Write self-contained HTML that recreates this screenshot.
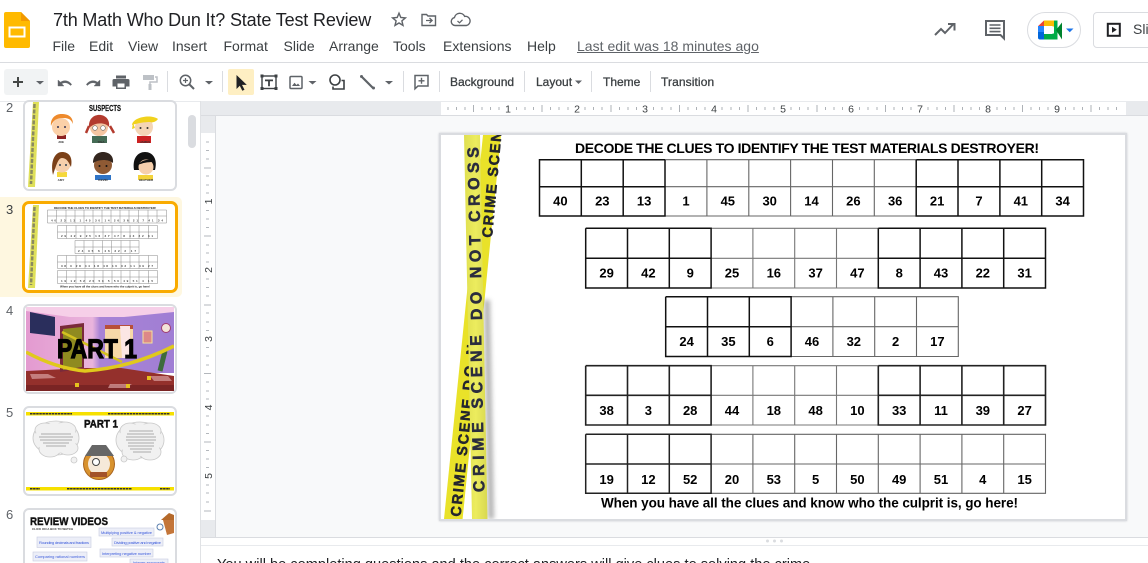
<!DOCTYPE html>
<html><head><meta charset="utf-8"><style>
*{box-sizing:border-box}
html,body{margin:0;padding:0;width:1148px;height:563px;overflow:hidden;background:#fff;font-family:"Liberation Sans",Arial,sans-serif;color:#3c4043}
#root{position:relative;width:1148px;height:563px;overflow:hidden;background:#fff}
.a{position:absolute;white-space:nowrap}
.m{position:absolute;top:38px;font-size:14px;line-height:17px;color:#3c4043}
.tb{position:absolute;top:75px;font-size:12px;line-height:14px;color:#3c4043;-webkit-text-stroke:.3px #3c4043}
.sep{position:absolute;top:71px;width:1px;height:21px;background:#dadce0}
.num{position:absolute;left:6px;font-size:13px;line-height:15px;color:#5f6368}
.th{position:absolute;left:23px;width:154px;background:#fff;border:2px solid #dadce0;border-radius:6px;overflow:hidden}
svg{position:absolute;display:block}
</style></head><body><div id="root">

<!-- top header -->
<svg style="left:0;top:0" width="40" height="56" viewBox="0 0 40 56">
<path d="M6 12H21L30 21V46a2 2 0 0 1-2 2H6a2 2 0 0 1-2-2V14a2 2 0 0 1 2-2z" fill="#ffba00"/>
<path d="M21 12L30 21H21z" fill="#f29900"/>
<rect x="9.500" y="27.500" width="15" height="9" fill="none" stroke="#fff" stroke-width="2"/>
</svg>
<div class="a" style="left:53px;top:10px;font-size:18px;line-height:21px;color:#202124;letter-spacing:-.15px">7th Math Who Dun It? State Test Review</div>
<svg style="left:388px;top:8px" width="90" height="24" viewBox="388 8 90 24" fill="none" stroke="#5f6368" stroke-width="1.400">
<path d="M399 13.200l1.800 4.300 4.600.4-3.500 3 1.100 4.500-4-2.400-4 2.400 1.100-4.500-3.500-3 4.600-.4z"/>
<path d="M422 14.500h4.500l1.500 1.500h7.500v9.500H422z"/><path d="M426 20.500h5.500M429.500 18l2.600 2.500-2.600 2.500" stroke-width="1.300"/>
<path d="M455 25.500a4 4 0 0 1-.6-7.900 5.500 5.500 0 0 1 10.300-1.200 4.600 4.600 0 0 1 1.600 9.100z"/><path d="M457.500 21l2 1.800 3-3" stroke-width="1.200"/>
</svg>
<div class="m" style="left:52.500px">File</div>
<div class="m" style="left:89px">Edit</div>
<div class="m" style="left:128px">View</div>
<div class="m" style="left:172px">Insert</div>
<div class="m" style="left:223.500px">Format</div>
<div class="m" style="left:283.500px">Slide</div>
<div class="m" style="left:329px">Arrange</div>
<div class="m" style="left:393px">Tools</div>
<div class="m" style="left:443px">Extensions</div>
<div class="m" style="left:527px">Help</div>
<div class="m" style="left:577px;color:#5f6368;text-decoration:underline;letter-spacing:.02px">Last edit was 18 minutes ago</div>

<!-- right header -->
<svg style="left:930px;top:14px" width="80" height="32" viewBox="930 14 80 32" fill="none">
<path d="M935 35l6-6 4 4 8-8.500" stroke="#5f6368" stroke-width="2"/><path d="M948 24h6.500v6.500" stroke="#5f6368" stroke-width="2"/>
<path d="M986 21h18v17.500l-3.500-3.500H986z" stroke="#5f6368" stroke-width="2" stroke-linejoin="miter"/>
<path d="M989.500 25h11M989.500 28.300h11M989.500 31.600h11" stroke="#5f6368" stroke-width="1.600"/>
</svg>
<div class="a" style="left:1027px;top:12px;width:54px;height:36px;border:1px solid #dadce0;border-radius:18px"></div>
<svg style="left:1036px;top:18px" width="40" height="24" viewBox="1036 18 40 24">
<path d="M1044 20.500h10v6h-10z" fill="#fbbc04"/><path d="M1044 20.500l-5.800 5.500h5.800z" fill="#ea4335"/>
<path d="M1038 26h6v6h-6z" fill="#2684fc"/><path d="M1038 32h6v7.500h-4a2 2 0 0 1-2-2z" fill="#0066da"/>
<path d="M1044 33.500h10v6h-10z" fill="#00ac47"/><path d="M1054 20.500h3.500V39.500H1054z" fill="#00ac47"/>
<path d="M1056 30l6-5.500v15z" fill="#00832d"/><path d="M1056 30l6-7.500v15z" fill="#00832d"/>
<rect x="1044" y="26" width="8.500" height="8" fill="#fff"/>
<path d="M1066 28.500h7.500l-3.750 3.800z" fill="#1a73e8"/>
</svg>
<div class="a" style="left:1093px;top:12px;width:80px;height:36px;border:1px solid #dadce0;border-radius:4px"></div>
<svg style="left:1106px;top:22px" width="16" height="16" viewBox="0 0 16 16"><rect x="1.800" y="1.800" width="12" height="12" fill="none" stroke="#202124" stroke-width="2"/><path d="M6 4.800l4.800 3-4.800 3z" fill="#202124"/></svg>
<div class="a" style="left:1133px;top:21px;font-size:14px;line-height:17px;color:#3c4043">Sli</div>
<div class="a" style="left:0;top:62px;width:1148px;height:1px;background:#dadce0"></div>

<!-- toolbar -->
<div class="a" style="left:4px;top:69px;width:44px;height:26px;background:#f1f3f4;border-radius:3px"></div>
<div class="a" style="left:228px;top:69px;width:26px;height:26px;background:#feefc3;border-radius:2px"></div>
<div class="sep" style="left:167px"></div><div class="sep" style="left:222px"></div><div class="sep" style="left:403px"></div>
<div class="sep" style="left:439px"></div><div class="sep" style="left:524px"></div><div class="sep" style="left:591px"></div><div class="sep" style="left:650px"></div>
<svg style="left:0;top:63px" width="440" height="38" viewBox="0 63 440 38">
<path d="M18 77v10M13 82h10" stroke="#444746" stroke-width="2" fill="none"/>
<path d="M36 81h8l-4 3.500z" fill="#5f6368"/>
<path d="M58 80v6h6l-2.200-2.200c1.800-1.500 5.800-1.800 8.700 1.700l1.200-1c-3-4.400-8-4.700-11.200-2.300z" fill="#5f6368" stroke="#5f6368" stroke-width=".4"/>
<path d="M100 80v6h-6l2.200-2.200c-1.800-1.500-5.800-1.800-8.700 1.700l-1.200-1c3-4.400 8-4.700 11.200-2.300z" fill="#5f6368" stroke="#5f6368" stroke-width=".4"/>
<path d="M116 75.500h10v3h-10zM114 79h14a1.500 1.500 0 0 1 1.500 1.500v6H126V89H116v-2.500h-3.500v-6A1.500 1.500 0 0 1 114 79z" fill="#5f6368"/><rect x="117.500" y="83.500" width="7" height="4" fill="#fff"/>
<path d="M143 75h11v5h-11z" fill="#bdc1c6"/><path d="M155 77h2v5h-7v2" fill="none" stroke="#bdc1c6" stroke-width="1.500"/><rect x="148.500" y="84" width="3" height="6" fill="#bdc1c6"/>
<circle cx="185.500" cy="80.500" r="5.200" fill="none" stroke="#5f6368" stroke-width="1.500"/><path d="M189.500 84.500l4.500 4.500" stroke="#5f6368" stroke-width="2"/><path d="M183 80.500h5M185.500 78v5" stroke="#5f6368" stroke-width="1.200"/>
<path d="M205 81h8l-4 3.500z" fill="#5f6368"/>
<path d="M236.500 75l0 14 3.300-3.300 2.500 5 2.200-1-2.500-4.800h4.800z" fill="#202124"/>
<rect x="262" y="76" width="14" height="12.500" fill="none" stroke="#3c4043" stroke-width="1.400"/>
<g fill="#3c4043"><rect x="260.500" y="74.500" width="3" height="3"/><rect x="274.500" y="74.500" width="3" height="3"/><rect x="260.500" y="87" width="3" height="3"/><rect x="274.500" y="87" width="3" height="3"/></g>
<path d="M265 79.500h8v1.800h-3.100v5h-1.800v-5H265z" fill="#3c4043"/>
<rect x="290" y="76.500" width="12" height="12" rx="1" fill="none" stroke="#5f6368" stroke-width="1.500"/><path d="M292 86l2.500-3.200 2 2.200 1.500-1.500 2 2.500z" fill="#5f6368"/>
<path d="M308.500 81h8l-4 3.500z" fill="#5f6368"/>
<circle cx="335" cy="80" r="5" fill="none" stroke="#3c4043" stroke-width="1.600"/><path d="M341.500 80.500h2.500v8.500h-11v-2.500" fill="none" stroke="#3c4043" stroke-width="1.600"/>
<path d="M362 77l11 11" stroke="#5f6368" stroke-width="2.200"/><circle cx="361.500" cy="76.500" r="1.500" fill="#5f6368"/><circle cx="373.500" cy="88" r="1.500" fill="#5f6368"/>
<path d="M385 81h8l-4 3.500z" fill="#5f6368"/>
<path d="M415 75.500h13v10.500h-10l-3 2.800z" fill="none" stroke="#5f6368" stroke-width="1.500"/><path d="M421.500 77.800v6M418.500 80.800h6" stroke="#5f6368" stroke-width="1.400"/>
</svg>
<div class="tb" style="left:450px">Background</div>
<div class="tb" style="left:536px">Layout</div>
<svg style="left:574px;top:80px" width="9" height="5" viewBox="0 0 9 5"><path d="M1 .5h7L4.500 4z" fill="#5f6368"/></svg>
<div class="tb" style="left:603px">Theme</div>
<div class="tb" style="left:661px;letter-spacing:.1px">Transition</div>
<div class="a" style="left:0;top:101px;width:1148px;height:1px;background:#e8eaed"></div>

<!-- workspace -->
<div class="a" style="left:200px;top:102px;width:948px;height:435px;background:#f8f9fa"></div>
<div class="a" style="left:200px;top:101px;width:1px;height:462px;background:#e0e2e5"></div>

<!-- horizontal ruler -->
<svg style="left:201px;top:102px" width="947" height="14" viewBox="201 102 947 14">
<rect x="201" y="102" width="947" height="14" fill="#fff"/>
<rect x="201" y="102" width="240" height="13" fill="#e8eaed"/>
<rect x="1126" y="102" width="22" height="13" fill="#e8eaed"/>
<path d="M201 115.500H1148" stroke="#dadce0"/>
<path d="M448 107v3M456.500 107v3M465 107v3M473.500 105v7M482 107v3M490.500 107v3M499 107v3M516.500 107v3M525 107v3M533.500 107v3M542 105v7M550.500 107v3M559 107v3M568 107v3M585 107v3M593.500 107v3M602 107v3M611 105v7M619.500 107v3M628 107v3M636.500 107v3M653.500 107v3M662 107v3M671 107v3M679.500 105v7M688 107v3M696.500 107v3M705 107v3M722 107v3M731 107v3M739.500 107v3M748 105v7M756.500 107v3M765 107v3M774 107v3M791 107v3M799.500 107v3M808 107v3M817 105v7M825.500 107v3M834 107v3M842.500 107v3M859.500 107v3M868 107v3M877 107v3M885.500 105v7M894 107v3M902.500 107v3M911 107v3M928 107v3M937 107v3M945.500 107v3M954 105v7M962.500 107v3M971 107v3M979.500 107v3M997 107v3M1005.500 107v3M1014 107v3M1022.500 105v7M1031 107v3M1039.500 107v3M1048 107v3M1065.500 107v3M1074 107v3M1082.500 107v3M1091 105v7M1099.500 107v3M1108 107v3M1116.500 107v3" stroke="#9aa0a6" stroke-width=".8" fill="none"/>
<g font-family="Liberation Sans" font-size="10.500" fill="#3c4043" text-anchor="middle">
<text x="508" y="112.500">1</text><text x="577" y="112.500">2</text><text x="645" y="112.500">3</text><text x="714" y="112.500">4</text><text x="783" y="112.500">5</text><text x="851" y="112.500">6</text><text x="920" y="112.500">7</text><text x="988" y="112.500">8</text><text x="1057" y="112.500">9</text></g>
</svg>

<!-- vertical ruler -->
<svg style="left:201px;top:116px" width="15" height="421" viewBox="201 116 15 421">
<rect x="201" y="116" width="14" height="421" fill="#fff"/>
<rect x="201" y="116" width="14" height="17" fill="#e8eaed"/>
<rect x="201" y="520" width="14" height="17" fill="#e8eaed"/>
<path d="M215.500 116V537" stroke="#dadce0"/>
<path d="M206 142h3M206 150.500h3M206 159h3M204 168h7M206 176h3M206 185h3M206 193h3M206 210.500h3M206 219h3M206 227.500h3M204 236h7M206 245h3M206 253h3M206 262h3M206 279h3M206 287.500h3M206 296h3M204 305h7M206 313h3M206 322h3M206 330.500h3M206 347.500h3M206 356h3M206 365h3M204 373.500h7M206 382h3M206 391h3M206 399h3M206 416h3M206 425h3M206 433.500h3M204 442h7M206 450.500h3M206 459h3M206 467.500h3M206 485h3M206 493h3M206 502h3M204 511h7" stroke="#9aa0a6" stroke-width=".8" fill="none"/>
<g font-family="Liberation Sans" font-size="10.500" fill="#3c4043" text-anchor="middle">
<text transform="translate(212,201.500) rotate(-90)">1</text><text transform="translate(212,270) rotate(-90)">2</text><text transform="translate(212,339) rotate(-90)">3</text><text transform="translate(212,407.500) rotate(-90)">4</text><text transform="translate(212,476) rotate(-90)">5</text></g>
</svg>

<!-- slide -->
<div class="a" style="left:439px;top:133px;width:688px;height:388px;background:#fff;border:2px solid #dadce0;box-shadow:0 0 2px #c8cacd"></div>
<svg style="left:441px;top:135px" width="685" height="384" viewBox="441 135 685 384">
<defs><filter id="bl" x="-100%" width="300%"><feGaussianBlur stdDeviation="2.500"/></filter>
<linearGradient id="ga" x1="0" x2="1" y1="0" y2="0"><stop offset="0" stop-color="#dfdf50"/><stop offset=".5" stop-color="#ecec5e"/><stop offset="1" stop-color="#d8d850"/></linearGradient></defs>
<path d="M483 135H501L462.600 519H444z" fill="#e9e229"/>
<g font-family="Liberation Sans" font-weight="bold" font-size="14.500" fill="#23252f" stroke="#23252f" stroke-width=".5">
<text transform="translate(460.500,517) rotate(-84.200)" textLength="118" lengthAdjust="spacing">CRIME SCENE</text>
<text transform="translate(472.500,391) rotate(-84.200)" textLength="46" lengthAdjust="spacing">DO N</text>
<text transform="translate(492,238) rotate(-84.800)" textLength="118" lengthAdjust="spacing">CRIME SCENE</text>
</g>
<path d="M484 300l4 219h6L490 300z" fill="#666" opacity=".5" filter="url(#bl)"/>
<path d="M464 135H480L487.500 519H472z" fill="url(#ga)"/>
<g font-family="Liberation Sans" font-weight="bold" font-size="16" fill="#2a2c3e" stroke="#2a2c3e" stroke-width=".5">
<text transform="translate(484.500,492) rotate(-91.200)" textLength="157" lengthAdjust="spacing">CRIME SCENE</text>
<text transform="translate(482,320) rotate(-91.200)" textLength="173" lengthAdjust="spacing">DO NOT CROSS</text>
</g>
<!-- grid: gray parts -->
<path d="M665 159.700H916M665 186.700H916M665 216H916M706.900 159.700V216M748.800 159.700V216M790.600 159.700V216M832.500 159.700V216M874.300 159.700V216" stroke="#666" stroke-width="1.100" fill="none"/>
<path d="M711 228.300H878.300M711 258.300H878.300M711 288H878.300M752.900 228.300V288M794.700 228.300V288M836.500 228.300V288" stroke="#777" stroke-width="1.100" fill="none"/>
<path d="M791 296.700H958.300V356.500H791M791 326.700H958.300M832.900 296.700V356.500M874.700 296.700V356.500M916.500 296.700V356.500" stroke="#666" stroke-width="1.100" fill="none"/>
<path d="M711 365.700H878.300M711 395.300H878.300M711 425H878.300M752.900 365.700V425M794.700 365.700V425M836.500 365.700V425" stroke="#777" stroke-width="1.100" fill="none"/>
<path d="M711 434.300H1045.500V493.300H711M711 464H1045.500M752.900 434.300V493.300M794.700 434.300V493.300M836.500 434.300V493.300M878.300 434.300V493.300M920.100 434.300V493.300M961.900 434.300V493.300M1003.700 434.300V493.300" stroke="#666" stroke-width="1.100" fill="none"/>
<!-- grid: dark parts -->
<path d="M665 159.700H539.500V216H665V159.700M539.500 186.700H665M581.300 159.700V216M623.200 159.700V216" stroke="#111" stroke-width="1.500" fill="none"/>
<path d="M916.200 159.700H1083.500V216H916.200V159.700M916.200 186.700H1083.500M958 159.700V216M999.900 159.700V216M1041.700 159.700V216" stroke="#111" stroke-width="1.500" fill="none"/>
<path d="M585.700 228.300H711.100V288H585.700V228.300M585.700 258.300H711.100M627.500 228.300V288M669.300 228.300V288" stroke="#111" stroke-width="1.500" fill="none"/>
<path d="M878.300 228.300H1045.500V288H878.300V228.300M878.300 258.300H1045.500M920.100 228.300V288M961.900 228.300V288M1003.700 228.300V288" stroke="#111" stroke-width="1.500" fill="none"/>
<path d="M665.700 296.700H791.100V356.500H665.700V296.700M665.700 326.700H791.100M707.500 296.700V356.500M749.300 296.700V356.500" stroke="#111" stroke-width="1.500" fill="none"/>
<path d="M585.700 365.700H711.100V425H585.700V365.700M585.700 395.300H711.100M627.500 365.700V425M669.300 365.700V425" stroke="#222" stroke-width="1.600" fill="none"/>
<path d="M878.300 365.700H1045.500V425H878.300V365.700M878.300 395.300H1045.500M920.100 365.700V425M961.900 365.700V425M1003.700 365.700V425" stroke="#222" stroke-width="1.600" fill="none"/>
<path d="M585.700 434.300H711.100V493.300H585.700V434.300M585.700 464H711.100M627.500 434.300V493.300M669.300 434.300V493.300" stroke="#222" stroke-width="1.500" fill="none"/>
<g font-family="Liberation Sans" font-weight="bold" fill="#000">
<text x="807" y="153" font-size="14" text-anchor="middle" textLength="464" lengthAdjust="spacing">DECODE THE CLUES TO IDENTIFY THE TEST MATERIALS DESTROYER!</text>
<text x="809.500" y="507.500" font-size="13.500" text-anchor="middle" textLength="417" lengthAdjust="spacing">When you have all the clues and know who the culprit is, go here!</text>
<g font-size="13" text-anchor="middle">
<text x="560.400" y="205.500">40</text><text x="602.300" y="205.500">23</text><text x="644.100" y="205.500">13</text><text x="686" y="205.500">1</text><text x="727.800" y="205.500">45</text><text x="769.700" y="205.500">30</text><text x="811.500" y="205.500">14</text><text x="853.400" y="205.500">26</text><text x="895.200" y="205.500">36</text><text x="937.100" y="205.500">21</text><text x="979" y="205.500">7</text><text x="1020.800" y="205.500">41</text><text x="1062.600" y="205.500">34</text>
<text x="606.600" y="277.500">29</text><text x="648.400" y="277.500">42</text><text x="690.200" y="277.500">9</text><text x="732" y="277.500">25</text><text x="773.800" y="277.500">16</text><text x="815.600" y="277.500">37</text><text x="857.400" y="277.500">47</text><text x="899.200" y="277.500">8</text><text x="941" y="277.500">43</text><text x="982.800" y="277.500">22</text><text x="1024.600" y="277.500">31</text>
<text x="686.600" y="346">24</text><text x="728.400" y="346">35</text><text x="770.200" y="346">6</text><text x="812" y="346">46</text><text x="853.800" y="346">32</text><text x="895.600" y="346">2</text><text x="937.400" y="346">17</text>
<text x="606.600" y="415">38</text><text x="648.400" y="415">3</text><text x="690.200" y="415">28</text><text x="732" y="415">44</text><text x="773.800" y="415">18</text><text x="815.600" y="415">48</text><text x="857.400" y="415">10</text><text x="899.200" y="415">33</text><text x="941" y="415">11</text><text x="982.800" y="415">39</text><text x="1024.600" y="415">27</text>
<text x="606.600" y="484">19</text><text x="648.400" y="484">12</text><text x="690.200" y="484">52</text><text x="732" y="484">20</text><text x="773.800" y="484">53</text><text x="815.600" y="484">5</text><text x="857.400" y="484">50</text><text x="899.200" y="484">49</text><text x="941" y="484">51</text><text x="982.800" y="484">4</text><text x="1024.600" y="484">15</text>
</g></g>
</svg>

<!-- notes -->
<div class="a" style="left:201px;top:537px;width:947px;height:1px;background:#dadce0"></div>
<div class="a" style="left:201px;top:538px;width:947px;height:8px;background:#fff"></div>
<div class="a" style="left:201px;top:545px;width:947px;height:1px;background:#e8eaed"></div>
<svg style="left:764px;top:538px" width="24" height="6" viewBox="0 0 24 6"><circle cx="3.500" cy="3" r="1.500" fill="#dadce0"/><circle cx="10.500" cy="3" r="1.500" fill="#dadce0"/><circle cx="17.500" cy="3" r="1.500" fill="#dadce0"/></svg>
<div class="a" style="left:217px;top:555px;font-size:14.600px;line-height:20px;color:#202124">You will be completing questions and the correct answers will give clues to solving the crime.</div>

<!-- sidebar -->
<div class="a" style="left:0;top:102px;width:200px;height:461px;background:#fff;overflow:hidden"></div>
<div class="a" style="left:0;top:197px;width:182px;height:100px;background:#fef7e0;border-radius:0 5px 5px 0"></div>
<div class="num" style="top:100px">2</div>
<div class="num" style="top:202px;color:#3c4043">3</div>
<div class="num" style="top:303px">4</div>
<div class="num" style="top:405px">5</div>
<div class="num" style="top:507px">6</div>
<div class="a" style="left:188px;top:115px;width:8px;height:33px;background:#dadce0;border-radius:4px"></div>

<!-- thumb 2 -->
<div class="th" style="top:100px;height:91px"></div>
<svg style="left:25px;top:102px" width="150" height="87" viewBox="25 102 150 87">
<path d="M33 102h6l-4 85h-7z" fill="#dfe05a"/><path d="M34.500 104l-3.500 80" stroke="#8a8a60" stroke-width="2.500" stroke-dasharray="4 1.500"/>
<text x="105" y="111" font-family="Liberation Sans" font-weight="bold" font-size="8" text-anchor="middle" fill="#111" stroke="#111" stroke-width=".2" textLength="32" lengthAdjust="spacingAndGlyphs">SUSPECTS</text>
<path d="M52 134c4-2 16-2 20 0v4H52z" fill="#fff"/><path d="M57 135h9v4h-9z" fill="#8c2222"/>
<circle cx="61" cy="127" r="9" fill="#fbd0a8"/><path d="M51 126c-1-8 5-12 10-12s12 1 12 10c-2-5-5-6-10-6-6 0-10 2-12 8z" fill="#ee8a2c"/><circle cx="58" cy="127" r="1" fill="#335"/><circle cx="65" cy="127" r="1" fill="#335"/>
<path d="M92 136h15v7H92z" fill="#456b55"/><circle cx="99" cy="127" r="9" fill="#f5c6a2"/><path d="M89 128c-1-10 6-14 12-13s9 6 8 12c-4-5-14-5-20 1z" fill="#b33b2e"/><path d="M89 126l-3 7M110 126l4 7" stroke="#b33b2e" stroke-width="2.500"/><circle cx="95" cy="128" r="2.300" fill="#fff" stroke="#666" stroke-width=".6"/><circle cx="103" cy="128" r="2.300" fill="#fff" stroke="#666" stroke-width=".6"/>
<path d="M137 136h14v7h-14z" fill="#c22"/><circle cx="144" cy="127" r="9" fill="#f4d5b5"/><path d="M132 125c1-8 19-11 26-6-2 3-6 4-8 3-5 0-12 1-18 3z" fill="#f1d21d"/><path d="M133 123l-1 6 3-1z" fill="#f1d21d"/><circle cx="140.500" cy="128" r="1" fill="#333"/><circle cx="147.500" cy="128" r="1" fill="#333"/>
<path d="M57 172h10v5H57z" fill="#f5d83a"/><circle cx="62" cy="164" r="8.500" fill="#f6cfac"/><path d="M53 175c-3-14 2-23 9-23s11 5 9 15c-2-4-4-9-9-9-4 0-6 8-9 17z" fill="#7b4018"/><circle cx="60" cy="165" r="1" fill="#345"/><circle cx="66" cy="165" r="1" fill="#345"/>
<path d="M95 175h16v5H95z" fill="#2f74c6"/><circle cx="103" cy="165" r="9" fill="#8f5a34"/><path d="M93 163c0-8 5-11 10-11s11 3 10 11c-5-4-14-4-20 0z" fill="#33261f"/><circle cx="99.500" cy="166" r="1" fill="#111"/><circle cx="106.500" cy="166" r="1" fill="#111"/>
<path d="M138 175h15v5h-15z" fill="#f3d33b"/><path d="M134 170c-2-12 4-18 11-18s13 6 10 18z" fill="#111"/><circle cx="146" cy="167" r="7.500" fill="#f6cfac"/><path d="M138 165c3-5 12-7 15-3-5 0-11 1-15 3z" fill="#111"/>
<g font-family="Liberation Sans" font-weight="bold" font-size="3" fill="#333" text-anchor="middle"><text x="61" y="143">JOE</text><text x="101" y="143">TINA</text><text x="145" y="143">JAMES</text><text x="61" y="181">AMY</text><text x="103" y="181">KEVIN</text><text x="146" y="181">HEATHER</text></g>
</svg>

<!-- thumb 3 -->
<div class="th" style="top:201px;left:22px;width:156px;height:92px;border:3px solid #f9ab00;border-radius:7px"></div>
<svg style="left:25px;top:204px" width="150" height="86" viewBox="25 204 150 86">
<path d="M33 205h6l-4 83h-7z" fill="#dfe05a"/><path d="M34.500 207l-3.500 78" stroke="#8a8a60" stroke-width="2.500" stroke-dasharray="4 1.500"/>
<g stroke="#888" stroke-width=".5" fill="none">
<path d="M47.500 210H166.500V223H47.500zM47.500 216H166.500M56.500 210v13M66 210v13M75 210v13M84 210v13M93 210v13M102 210v13M111 210v13M120 210v13M129 210v13M138.500 210v13M148 210v13M157 210v13"/>
<path d="M57.500 225.500H157.500V238.500H57.500zM57.500 232H157.500M66.500 225.500v13M76 225.500v13M85 225.500v13M94 225.500v13M103 225.500v13M112 225.500v13M121 225.500v13M130 225.500v13M139 225.500v13M148.500 225.500v13"/>
<path d="M75 240.500H139V253.500H75zM75 247H139M84 240.500v13M93 240.500v13M102.500 240.500v13M111.500 240.500v13M121 240.500v13M130 240.500v13"/>
<path d="M57.500 255.500H157.500V268.500H57.500zM57.500 262H157.500M66.500 255.500v13M76 255.500v13M85 255.500v13M94 255.500v13M103 255.500v13M112 255.500v13M121 255.500v13M130 255.500v13M139 255.500v13M148.500 255.500v13"/>
<path d="M57.500 270.500H157.500V283.500H57.500zM57.500 277H157.500M66.500 270.500v13M76 270.500v13M85 270.500v13M94 270.500v13M103 270.500v13M112 270.500v13M121 270.500v13M130 270.500v13M139 270.500v13M148.500 270.500v13"/>
</g>
<g font-family="Liberation Sans" font-weight="bold" fill="#333" text-anchor="middle">
<text x="105" y="209" font-size="3.100" textLength="102">DECODE THE CLUES TO IDENTIFY THE TEST MATERIALS DESTROYER!</text>
<text x="105" y="287.500" font-size="3" textLength="90">When you have all the clues and know who the culprit is, go here!</text>
<g font-size="3" fill="#444">
<text x="107" y="221.500" textLength="112">40 23 13 1 45 30 14 26 36 21 7 41 34</text>
<text x="107" y="237" textLength="92">29 42 9 25 16 37 47 8 43 22 31</text>
<text x="107" y="252" textLength="58">24 35 6 46 32 2 17</text>
<text x="107" y="267" textLength="92">38 3 28 44 18 48 10 33 11 39 27</text>
<text x="107" y="282" textLength="92">19 12 52 20 53 5 50 49 51 4 15</text>
</g></g>
</svg>

<!-- thumb 4 -->
<div class="th" style="top:304px;height:90px"></div>
<svg style="left:26px;top:307px" width="148" height="84" viewBox="26 307 148 84">
<defs><linearGradient id="wl" x1="0" x2="1" y1="0" y2="0"><stop offset="0" stop-color="#e39ad0"/><stop offset=".45" stop-color="#e9b4dc"/><stop offset=".5" stop-color="#a883d6"/><stop offset="1" stop-color="#a07ed4"/></linearGradient></defs>
<rect x="26" y="307" width="148" height="66" fill="url(#wl)"/>
<path d="M26 307h148v5l-50 5H70L26 311z" fill="#f6cfe8"/>
<path d="M26 371l60-3 35 0 53 8v15H26z" fill="#94302c"/><path d="M26 385h148v6H26z" fill="#7a2424"/>
<path d="M30 374h18l8 4-24 1zM150 376h18l4 5-18 0zM110 384h22l-6 4h-18z" fill="#d9a0a0" opacity=".7"/>
<path d="M30 312l25 5v19l-25-3z" fill="#2a2e5c"/>
<path d="M60 326l24-3v45l-24 4z" fill="#7a2a3a"/><path d="M63 329l19-2v40l-19 3z" fill="#8f8a20"/>
<path d="M105 329l28-3v32h-28z" fill="#f7d8a8"/><path d="M105 329h28v-4h-28z" fill="#b84f3a"/><path d="M120 326l10 0v32h-8z" fill="#fbe6e4"/>
<path d="M143 331h9v12h-9z" fill="#d88" stroke="#f5e29a"/><circle cx="166" cy="328" r="4.500" fill="#f4e4d8" stroke="#a03c70"/>
<path d="M160 371l5-20" stroke="#3d6b3b" stroke-width="5"/>
<path d="M26 352Q55 368 85 371Q130 368 174 346" stroke="#e0c91c" stroke-width="3.500" fill="none"/>
<path d="M62 332l60 30" stroke="#d4c11f" stroke-width="2.500"/>
<g fill="#e6c21e"><rect x="75" y="383" width="4" height="4"/><rect x="126" y="384" width="4" height="4"/><rect x="147" y="376" width="4" height="4"/></g>
<text x="97" y="358" font-family="Liberation Sans" font-weight="bold" font-size="27" text-anchor="middle" fill="#000" stroke="#000" stroke-width="1.200" textLength="80" lengthAdjust="spacingAndGlyphs">PART 1</text>
</svg>

<!-- thumb 5 -->
<div class="th" style="top:406px;height:90px"></div>
<svg style="left:25px;top:408px" width="150" height="86" viewBox="25 408 150 86">
<rect x="26" y="412" width="148" height="3.500" fill="#f6e000"/><rect x="26" y="487" width="148" height="3.500" fill="#f6e000"/>
<path d="M30 413.700h42M108 413.700h62M30 488.700h10M67 488.700h65M160 488.700h10" stroke="#333" stroke-width="1.500" stroke-dasharray="2.500 .6"/>
<text x="101" y="427.500" font-family="Liberation Sans" font-weight="bold" font-size="11" text-anchor="middle" fill="#111" stroke="#111" stroke-width=".5" textLength="34" lengthAdjust="spacingAndGlyphs">PART 1</text>
<g fill="#f1f1f1" stroke="#c8c8c8" stroke-width=".8">
<ellipse cx="56" cy="438" rx="23" ry="17"/><ellipse cx="45" cy="430" rx="10" ry="7"/><ellipse cx="65" cy="430" rx="11" ry="8"/><ellipse cx="50" cy="449" rx="11" ry="8"/><ellipse cx="68" cy="448" rx="10" ry="7"/>
<ellipse cx="140" cy="440" rx="24" ry="18"/><ellipse cx="130" cy="431" rx="10" ry="8"/><ellipse cx="150" cy="431" rx="11" ry="8"/><ellipse cx="133" cy="452" rx="11" ry="8"/><ellipse cx="150" cy="452" rx="11" ry="8"/>
<circle cx="74" cy="460" r="3"/><circle cx="124" cy="459" r="3"/></g>
<g fill="#f1f1f1"><ellipse cx="56" cy="438" rx="21" ry="15"/><ellipse cx="140" cy="440" rx="22" ry="16"/></g>
<path d="M41 434h30M39 437h34M40 440h32M43 443h26M46 446h20M129 431h24M127 434h27M126 437h30M126 440h30M128 443h26M128 446h26M130 449h22M133 452h18" stroke="#aaa" stroke-width="1"/>
<circle cx="99" cy="464" r="15.500" fill="#d8922e" stroke="#a9641f"/><circle cx="99" cy="464" r="11" fill="#f6e9d9"/>
<path d="M85 456l7-11h14l8 11z" fill="#666"/><circle cx="96" cy="462" r="3.500" fill="#fff" stroke="#444"/><path d="M90 472h17v5H90z" fill="#a3522a"/>
</svg>

<!-- thumb 6 -->
<div class="th" style="top:508px;height:70px"></div>
<svg style="left:25px;top:510px" width="150" height="53" viewBox="25 510 150 53">
<text x="30" y="525" font-family="Liberation Sans" font-weight="bold" font-size="10.700" fill="#111" stroke="#111" stroke-width=".4" textLength="78" lengthAdjust="spacingAndGlyphs">REVIEW VIDEOS</text>
<text x="32" y="530" font-family="Liberation Sans" font-weight="bold" font-size="3" fill="#444">CLICK ON A BOX TO WATCH</text>
<path d="M161 520l8-7 5 2v5z" fill="#b5692a"/><path d="M163 520h11v13l-7 2z" fill="#c4763a"/><circle cx="160" cy="527" r="3" fill="none" stroke="#5a7fae"/>
<g fill="#eceef8" stroke="#c8cbe0" stroke-width=".6">
<rect x="37" y="537" width="54" height="10.500"/><rect x="33" y="552" width="54" height="9"/><rect x="99" y="528" width="55" height="8"/><rect x="112" y="538" width="51" height="8"/><rect x="100" y="549" width="53" height="8"/><rect x="130" y="559" width="38" height="8"/></g>
<g font-family="Liberation Sans" font-size="4" fill="#3b5bdb">
<text x="39" y="544" textLength="50">Rounding decimals and fractions</text><text x="35" y="558" textLength="50">Comparing rational numbers</text><text x="101" y="534" textLength="51">Multiplying positive &amp; negative</text><text x="114" y="544" textLength="47">Dividing positive and negative</text><text x="102" y="555" textLength="49">Interpreting negative number</text><text x="133" y="564">Integer exponents</text></g>
</svg>

</div></body></html>
